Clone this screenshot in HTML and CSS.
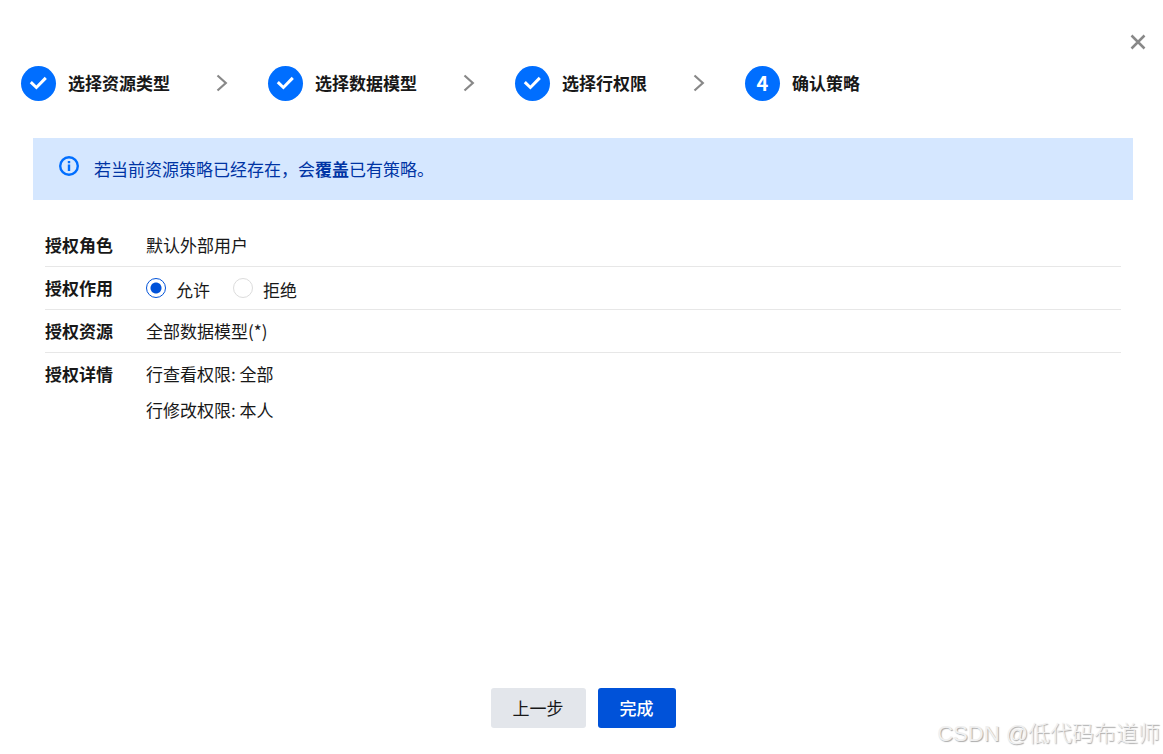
FILE: index.html
```html
<!DOCTYPE html>
<html lang="zh-CN">
<head>
    <meta charset="UTF-8">
    <meta name="viewport" content="width=device-width, initial-scale=1.0">
    <title>确认策略</title>
    <link rel="stylesheet" href="styles.css">
</head>
<body>

    <header class="dialog-header">
        <button type="button" class="close-btn" aria-label="关闭">
            <svg width="16" height="16" viewBox="0 0 16 16"><path d="M1.5 1.5 14.5 14.5M14.5 1.5 1.5 14.5" /></svg>
        </button>
    </header>

    <ol class="steps">
        <li class="step">
            <span class="step-icon">
                <svg width="20" height="20" viewBox="0 0 20 20"><path d="M1.8 9.2 7.4 14.5 16.8 4.9" /></svg>
            </span>
            <span>选择资源类型</span>
            <svg class="step-arrow" width="12" height="18" viewBox="0 0 12 18"><path d="M1.5 1.5 9.8 9 1.5 16.5" /></svg>
        </li>
        <li class="step">
            <span class="step-icon">
                <svg width="20" height="20" viewBox="0 0 20 20"><path d="M1.8 9.2 7.4 14.5 16.8 4.9" /></svg>
            </span>
            <span>选择数据模型</span>
            <svg class="step-arrow" width="12" height="18" viewBox="0 0 12 18"><path d="M1.5 1.5 9.8 9 1.5 16.5" /></svg>
        </li>
        <li class="step">
            <span class="step-icon">
                <svg width="20" height="20" viewBox="0 0 20 20"><path d="M1.8 9.2 7.4 14.5 16.8 4.9" /></svg>
            </span>
            <span>选择行权限</span>
            <svg class="step-arrow" width="12" height="18" viewBox="0 0 12 18"><path d="M1.5 1.5 9.8 9 1.5 16.5" /></svg>
        </li>
        <li class="step" aria-current="step">
            <span class="step-icon">4</span>
            <span>确认策略</span>
        </li>
    </ol>

    <main class="content">
        <div class="alert">
            <svg class="alert-icon" width="20" height="20" viewBox="0 0 20 20">
                <circle cx="10" cy="10" r="8.8" />
                <path d="M10 5v2.2M10 8.6V15" />
            </svg>
            <p>若当前资源策略已经存在，会<strong>覆盖</strong>已有策略。</p>
        </div>

        <dl class="detail-list">
            <div class="detail-row">
                <dt>授权角色</dt>
                <dd>默认外部用户</dd>
            </div>
            <div class="detail-row">
                <dt id="effectLabel">授权作用</dt>
                <dd class="radio-group" role="radiogroup" aria-labelledby="effectLabel">
                    <input type="radio" id="allow" name="effect" value="allow" checked>
                    <label for="allow">允许</label>
                    <input type="radio" id="deny" name="effect" value="deny">
                    <label for="deny">拒绝</label>
                </dd>
            </div>
            <div class="detail-row">
                <dt>授权资源</dt>
                <dd>全部数据模型(*)</dd>
            </div>
            <div class="detail-row">
                <dt>授权详情</dt>
                <dd>
                    <p>行查看权限: 全部</p>
                    <p>行修改权限: 本人</p>
                </dd>
            </div>
        </dl>
    </main>

    <footer class="dialog-footer">
        <button type="button" class="btn">上一步</button>
        <button type="button" class="btn btn-primary">完成</button>
    </footer>

    <div class="watermark">CSDN @低代码布道师</div>

</body>
</html>
```

FILE: styles.css
```css
/* Global reset */
* {
    margin: 0;
    padding: 0;
    box-sizing: border-box;
}

body {
    position: relative;
    display: flex;
    flex-direction: column;
    min-height: 100vh;
    background-color: #fff;
    color: #181818;
    font-family: "Noto Sans CJK SC", sans-serif;
    font-size: 17px;
    line-height: 36px;
}

button {
    font: inherit;
    border: none;
    cursor: pointer;
}

svg {
    fill: none;
    flex-shrink: 0;
}

/* Header */
.dialog-header {
    display: flex;
    justify-content: flex-end;
    padding: 30px 13px 0;
}

.close-btn {
    display: flex;
    align-items: center;
    justify-content: center;
    width: 24px;
    height: 24px;
    background: none;
    stroke: #888;
    stroke-width: 2.5;
}

/* Steps */
.steps {
    display: flex;
    flex-wrap: wrap;
    padding: 11px 21px 0;
    list-style: none;
    font-weight: bold;
}

.step {
    display: flex;
    align-items: center;
}

.step-icon {
    display: flex;
    align-items: center;
    justify-content: center;
    width: 35px;
    height: 35px;
    margin-right: 12px;
    border-radius: 50%;
    background-color: #006eff;
    color: #fff;
    font-size: 20px;
    stroke-width: 3;
}

.step-icon svg {
    stroke: #fff;
}

.step-arrow {
    margin: 0 40px 0 46px;
    stroke: #888;
    stroke-width: 2.2;
}

/* Content */
.content {
    flex: 1;
    padding: 37px 30px 0 33px;
}

.alert {
    display: flex;
    align-items: flex-start;
    gap: 15px;
    padding: 13px 26px;
    background-color: #d5e7ff;
    color: #0034a4;
}

.alert-icon {
    margin-top: 5px;
    stroke: #006eff;
    stroke-width: 2.4;
}

.detail-list {
    padding: 24px 12px;
}

.detail-row {
    display: flex;
    padding: 3px 0;
    border-bottom: 1px solid #e7e7e7;
}

.detail-row:last-child {
    border-bottom: none;
}

.detail-row dt {
    width: 101px;
    font-weight: bold;
}

.radio-group {
    display: flex;
    align-items: center;
    height: 36px;
}

.radio-group input {
    appearance: none;
    width: 20px;
    height: 20px;
    margin-right: 10px;
    border: 1px solid #dcdcdc;
    border-radius: 50%;
    background-color: #fff;
}

.radio-group input:checked {
    border-color: #0052d9;
    background-image: radial-gradient(circle, #0052d9 5px, transparent 6px);
}

.radio-group label {
    padding-top: 3px;
    margin-right: 23px;
}

/* Footer */
.dialog-footer {
    display: flex;
    justify-content: center;
    gap: 12px;
    padding: 0 30px 26px 33px;
}

.btn {
    height: 40px;
    padding: 0 22px;
    border-radius: 3px;
    background-color: #e3e6eb;
    color: #181818;
}

.btn-primary {
    background-color: #0052d9;
    color: #fff;
    font-weight: 500;
}

.watermark {
    position: absolute;
    right: 3px;
    bottom: 2px;
    color: #f0f0f0;
    font-family: "Liberation Sans", "Noto Sans CJK SC", sans-serif;
    font-size: 22px;
    font-weight: 300;
    line-height: 36px;
    text-shadow: 1px 1px 1px #aaa;
}
```
